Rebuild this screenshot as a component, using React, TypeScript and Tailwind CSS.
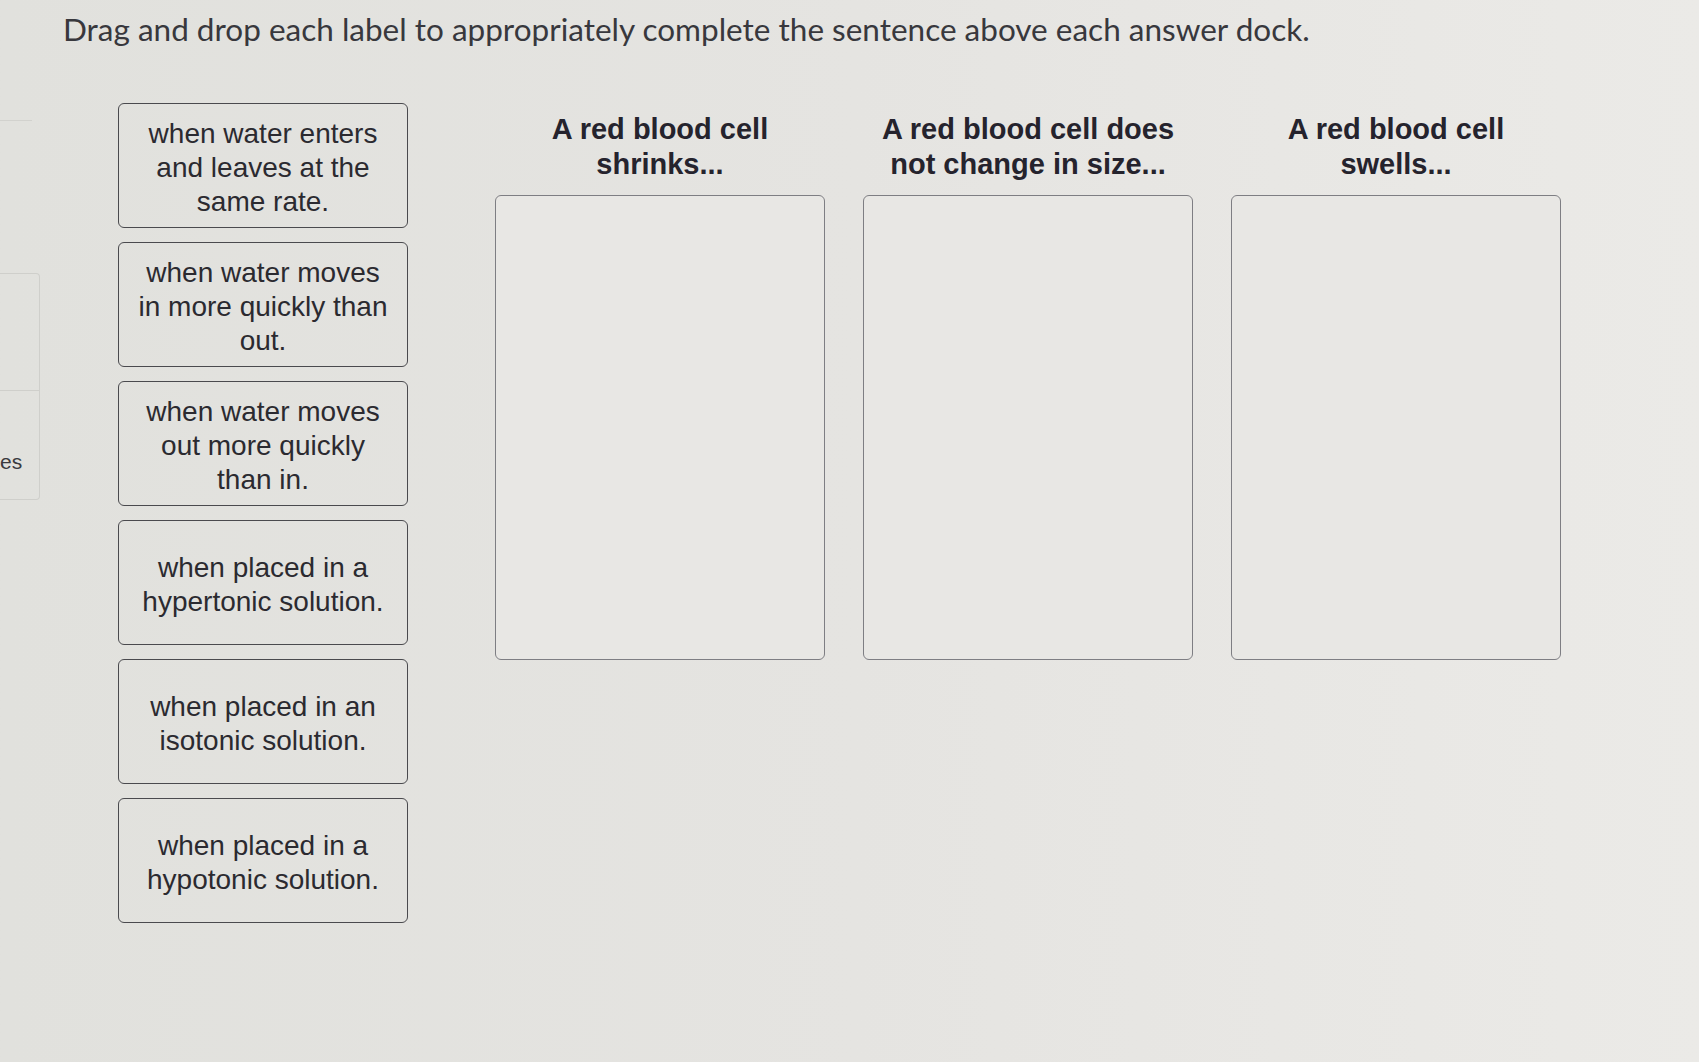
const labels = [
  ["when water enters", "and leaves at the", "same rate."],
  ["when water moves", "in more quickly than", "out."],
  ["when water moves", "out more quickly", "than in."],
  ["when placed in a", "hypertonic solution."],
  ["when placed in an", "isotonic solution."],
  ["when placed in a", "hypotonic solution."],
];

const docks = [
  ["A red blood cell", "shrinks..."],
  ["A red blood cell does", "not change in size..."],
  ["A red blood cell", "swells..."],
];

export default function App() {
  return (
    <div className="h-[1062px] w-full overflow-hidden bg-gradient-to-r from-[#e1e1dd] via-[#e5e4e1] to-[#ebeae7] font-['Liberation_Sans',Arial,sans-serif] text-[#2b2a30]">
      <h1 className="pl-[63px] pt-[10px] font-['Lato',sans-serif] text-[31.5px] leading-[38px] font-normal text-[#38383d]">
        Drag and drop each label to appropriately complete the sentence above each answer dock.
      </h1>

      <div className="mt-[55px] flex">
        {/* cut-off sidebar */}
        <div className="w-[40px] shrink-0">
          <div className="mt-[17px] h-px w-[32px] bg-[#d2d2ce]" />
          <div className="mt-[152px] h-[227px] rounded-r-[4px] border border-l-0 border-[#cfcfcb]">
            <div className="h-[117px] border-b border-[#cfcfcb]" />
            <div className="pt-[60px] text-[21px] leading-none text-[#3a3a40]">es</div>
          </div>
        </div>

        {/* labels */}
        <div className="ml-[78px] flex w-[290px] shrink-0 flex-col gap-[14px]">
          {labels.map((lines, i) => (
            <div
              key={i}
              className="flex h-[125px] flex-col items-center justify-center rounded-[6px] border-[1.5px] border-[#4a4a4e] pt-[4px] text-center text-[28px] leading-[34px]"
            >
              {lines.map((l) => (
                <span key={l} className="whitespace-nowrap">
                  {l}
                </span>
              ))}
            </div>
          ))}
        </div>

        {/* answer docks */}
        <div className="ml-[87px] flex gap-[38px]">
          {docks.map((lines, i) => (
            <div key={i} className="flex w-[330px] flex-col items-center">
              <div className="mt-[9px] flex flex-col items-center text-center text-[29px] font-bold leading-[35px] text-[#25232d]">
                {lines.map((l) => (
                  <span key={l} className="whitespace-nowrap">
                    {l}
                  </span>
                ))}
              </div>
              <div className="mt-[13px] h-[465px] w-full rounded-[6px] border-[1.5px] border-[#7e7e83] bg-[#e8e7e4]" />
            </div>
          ))}
        </div>
      </div>
    </div>
  );
}
